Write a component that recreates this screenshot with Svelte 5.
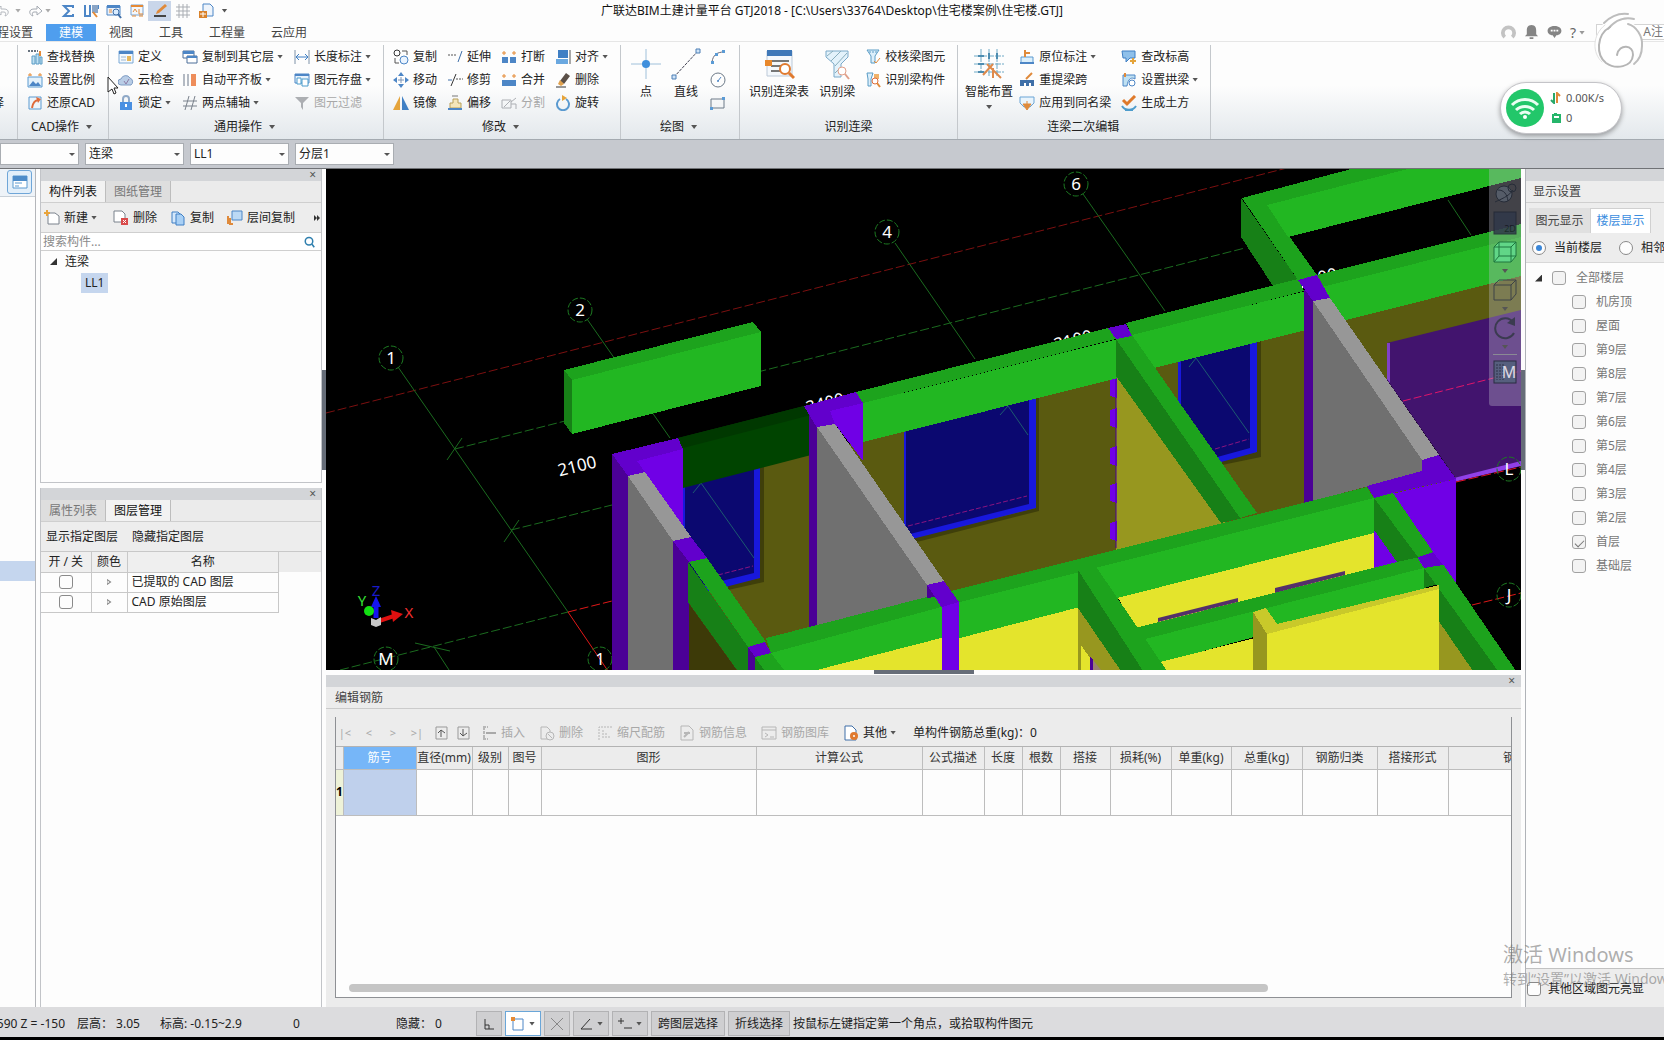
<script lang="ts">
  type Item = { icon: string; label: string; arrow?: boolean; disabled?: boolean }

  // 16x16 icon artwork, keyed by command
  const icons: Record<string, string> = {
    undo: '<path d="M9 13c4-1 5-7-1-7H5V3L0 8l5 4V9h3c2 0 2 2 1 4z" fill="none" stroke="#b5b9bf"/>',
    redo: '<path d="M7 13c-4-1-5-7 1-7h3V3l5 5-5 4V9H8c-2 0-2 2-1 4z" fill="none" stroke="#a5aab2"/>',
    sum: '<path d="M13 5V3H4l5 5-5 5h9v-2" fill="none" stroke="#4d86c6" stroke-width="2"/>',
    calc: '<path d="M2 2v11h5V9M7 2v7M10 2v4M13 2v4M16 2v4" fill="none" stroke="#4d86c6" stroke-width="2"/><path d="M9 2h6v8H9z" fill="#8aa5c6"/><path d="M10 9l4 5" stroke="#e58a35" stroke-width="2"/>',
    lookup: '<path d="M1 3h13v9H1z" fill="#e9f1fb" stroke="#4d86c6"/><path d="M1 2h13v3H1z" fill="#4d86c6"/><path d="M3 7h3M3 9h3" stroke="#e58a35"/><circle cx="10" cy="9" r="3" fill="#d9ecff" stroke="#3f6fa8"/><path d="M12 11l3 4" stroke="#3f6fa8" stroke-width="2"/>',
    review: '<path d="M2 2h12v10H2z" fill="#f3f7fc" stroke="#7ba3cf"/><path d="M2 3h12" stroke="#e58a35" stroke-width="2"/><path d="M4 9l2-3 2 3M10 6v5h4M3 13h4M10 13h4" fill="none" stroke="#e58a35"/>',
    edit: '<path d="M2 13h12" stroke="#444" stroke-width="2"/><path d="M4 11l1-3 8-7 2 2-8 7z" fill="#e08a3a"/>',
    gridlines: '<path d="M1 4h14M1 8h14M1 12h14M4 1v14M8 1v14M12 1v14" stroke="#a9adb3" fill="none"/>',
    export: '<path d="M5 1h7l3 3v9H5z" fill="#eef4fb" stroke="#4d86c6"/><path d="M1 8h8v7H1z" fill="#d9822b"/><path d="M5 9v5M2 11h6" stroke="#fff"/>',
    find: '<path d="M1 2h10" stroke="#68737f" stroke-width="2" stroke-dasharray="2 1"/><path d="M5 7h3v8H5zM9 5h3v10H9zM13 8h2v7h-2z" fill="#bfe0f2" stroke="#5a9cc5"/><path d="M13 2v5" stroke="#e58a35" stroke-width="2"/>',
    scale: '<path d="M1 5h14v10H1z" fill="#e4f1fb" stroke="#5a9ad0"/><path d="M2 14l4-5 3 3 2-2 3 4z" fill="#4d86c6"/><path d="M3 1v3M13 1v3M1 3h4M11 3h4" stroke="#e58a35"/>',
    restore: '<path d="M2 2h12v12H2z" fill="#eef5fb" stroke="#5a9ad0"/><path d="M5 13c1-6 3-7 6-8" fill="none" stroke="#df6b3b" stroke-width="2"/><path d="M9 2l5 2-3 4z" fill="#df6b3b"/>',
    define: '<path d="M1 2h14v12H1z" fill="#f5f9fd" stroke="#7ba9d6"/><path d="M1 2h14v3H1z" fill="#4d86c6"/><path d="M3 8h5M3 11h5" stroke="#9bb7d3"/><path d="M9 7h4v5H9z" fill="#e6b85c"/>',
    cloud: '<path d="M3 13a3 3 0 0 1 0-6 5 5 0 0 1 9-1 4 4 0 0 1 1 7z" fill="#b9cde6" stroke="#7e9cc4"/><path d="M6 9l2 3 3-5" fill="none" stroke="#8d7ba5"/>',
    lock: '<path d="M5 7V4a3 3 0 0 1 6 0v3" fill="none" stroke="#8fa9c7" stroke-width="2"/><path d="M2 7h12v8H2z" fill="#4a90e2"/><path d="M8 9v3" stroke="#fff" stroke-width="2"/>',
    copyfloor: '<path d="M1 2h11v7H1z" fill="#fff" stroke="#4d6f99"/><path d="M1 2h11v3H1z" fill="#4d86c6"/><path d="M5 7h10v7H5z" fill="#fff" stroke="#4d6f99"/><path d="M5 7h10v2H5z" fill="#4d86c6"/>',
    slab: '<path d="M2 2v12M6 2v12" stroke="#b4bac3" stroke-width="2"/><path d="M9 2h5v12H9z" fill="#ee8d5b"/>',
    axis: '<path d="M3 15L7 1M9 15l4-14M1 6h14M1 11h14" stroke="#7a828c" fill="none"/>',
    dim: '<path d="M1 1v14M15 1v14" stroke="#7e92a8"/><path d="M2 8h12M5 5L2 8l3 3M11 5l3 3-3 3" fill="none" stroke="#3f7fc4"/>',
    store: '<path d="M1 2h14v9H1z" fill="#e9f3fc" stroke="#4d86c6"/><path d="M1 2h14v2H1z" fill="#4d86c6"/><path d="M3 6h4v6H3zM8 7h6v7H8z" fill="#fff" stroke="#4d9ccc"/>',
    filter: '<path d="M1 2h14L9 8v7l-2-3V8z" fill="#9a9da1"/>',
    copy: '<circle cx="4" cy="4" r="3" fill="none" stroke="#333"/><circle cx="11" cy="11" r="4" fill="#eaf4ff" stroke="#4d86c6"/><path d="M9 2h5v4M2 9v5h4" fill="none" stroke="#555"/>',
    move: '<path d="M8 0l3 4H5zM8 16l3-4H5zM0 8l4-3v6zM16 8l-4-3v6z" fill="#4d86c6"/><path d="M8 5v6M5 8h6" stroke="#7a93b5"/>',
    mirror: '<path d="M7 1v14H0z" fill="#e5a43b"/><path d="M9 1v14h7z" fill="#3f7fc4"/>',
    extend: '<path d="M1 6h8" stroke="#555" stroke-dasharray="2 1"/><path d="M15 2l-4 11" stroke="#3f6fa8"/>',
    trim: '<path d="M1 8h4" stroke="#3f6fa8"/><path d="M9 7h7" stroke="#555" stroke-dasharray="2 1"/><path d="M9 2L4 14" stroke="#333"/>',
    offset: '<path d="M3 13V8h3V4h5v4h3v5z" fill="#f4e6ba" stroke="#b8a05a"/><path d="M1 14h14" stroke="#4d86c6" stroke-width="2"/><path d="M5 1h6" stroke="#777"/>',
    cut: '<path d="M1 8h6v6H1zM9 8h6v6H9z" fill="#4d86c6"/><path d="M1 4h4M11 4h4M3 2v4M13 2v4" stroke="#e58a35"/>',
    join: '<path d="M1 8h14v6H1z" fill="#4d86c6"/><path d="M1 4h4M11 4h4M3 2v4M13 2v4" stroke="#e58a35"/>',
    split: '<path d="M1 5h9v8H1zM10 7l5-4M10 9h5v5M3 12l6-6" fill="none" stroke="#9b9ea3"/>',
    align: '<path d="M3 1h10v8H3z" fill="#3f7fc4"/><path d="M1 10h12v5H1z" fill="#6aa8e0"/><path d="M15 1v14" stroke="#555"/>',
    erase: '<path d="M5 9l6-8 4 3-6 8z" fill="#5b5048"/><path d="M5 8l4 4-3 2-3-2z" fill="#e0a04b"/><path d="M1 15h10" stroke="#333"/>',
    rotate: '<path d="M5 4a6 6 0 1 0 6 0" fill="none" stroke="#5a9ad0" stroke-width="2"/><path d="M7 0v6l5-3z" fill="#e5a43b"/>',
    arc: '<path d="M2 13C3 6 7 3 14 3" fill="none" stroke="#667"/><path d="M1 12h3v3H1zM12 1h3v3h-3zM5 4h3v3H5z" fill="#5b9bd5"/>',
    circle: '<circle cx="8" cy="8" r="7" fill="none" stroke="#6d7a88"/><path d="M8 9l3-4" stroke="#4d86c6"/><circle cx="8" cy="9" r="1" fill="#4d86c6"/>',
    rect: '<path d="M1 4h13v9H1z" fill="none" stroke="#6d7a88"/><path d="M12 2h3v3h-3zM0 12h3v3H0z" fill="#5b9bd5"/>',
    checkbeam: '<path d="M2 1h12l-4 6v7H6V7z" fill="#dceffb" stroke="#5a9cc5"/><path d="M4 3h8" stroke="#5a9cc5" stroke-dasharray="2 1"/><path d="M9 12l2 2 4-5" fill="none" stroke="#df8a3b"/>',
    beampart: '<path d="M2 1h6l-2 6v7H3V7z" fill="#dceffb" stroke="#5a9cc5"/><path d="M9 2h5v5H9z" fill="#f0b26a"/><circle cx="10" cy="9" r="3" fill="#fff" stroke="#df6b3b"/><path d="M12 11l3 4" stroke="#df8a3b" stroke-width="2"/>',
    origin: '<path d="M2 8h12v6H2z" fill="#dceffb" stroke="#5a9ad0"/><path d="M1 14h14" stroke="#4d86c6" stroke-width="2"/><path d="M6 1v7M6 4h5" stroke="#df8a3b" stroke-width="2"/>',
    span: '<path d="M1 8h14v6h-3v-3h-2v3H7v-3H5v3H1z" fill="#3f6fa8"/><path d="M7 7l6-6" stroke="#df8a3b" stroke-width="2"/>',
    apply: '<path d="M1 2h14v6l-4 4H5L1 8z" fill="#e9f4fc" stroke="#6aa5d6"/><path d="M8 6v5M4 9l4 6 4-6z" fill="#df8a3b" stroke="#df8a3b"/>',
    level: '<path d="M1 2h13v7H9l-4 4V9H2z" fill="#8fc0ea" stroke="#3f7fc4"/><path d="M12 9v6M9 12h6" stroke="#e5a43b" stroke-width="2"/>',
    arch: '<path d="M2 3h12v4c-3-2-7-1-8 7H2z" fill="#bfe0f2" stroke="#4d86c6"/><circle cx="11" cy="11" r="3" fill="#fff" stroke="#4d86c6"/><path d="M4 1v4" stroke="#df8a3b" stroke-width="2"/>',
    earth: '<path d="M2 5l4 4 8-8" fill="none" stroke="#df7a2b" stroke-width="3"/><path d="M1 11c3 5 11 5 14 0M4 15h8" fill="none" stroke="#4d9ccc" stroke-width="2"/>',
    new: '<path d="M4 3h7l4 3v8H4z" fill="#fff" stroke="#7a828c"/><path d="M3 0v6M0 3h6" stroke="#e8a33a" stroke-width="2"/>',
    remove: '<path d="M1 1h8l3 3v8H1z" fill="#fff" stroke="#7a828c"/><path d="M8 8h7v7H8z" fill="#d94b4b"/><path d="M10 10l3 3M13 10l-3 3" stroke="#fff"/>',
    duplicate: '<path d="M2 2h6l2 2v9H2z" fill="#d5e8fb" stroke="#3f7fc4"/><path d="M6 4h5l3 3v8H6z" fill="#a9d0f5" stroke="#3f7fc4"/>',
    layercopy: '<path d="M5 1h10v9H5z" fill="#bcd9f5" stroke="#4d86c6"/><path d="M1 6v8M3 8v6h3" fill="none" stroke="#df8a3b" stroke-width="2"/>',
    up: '<path d="M2 2h11v12H2z" fill="none" stroke="#999"/><path d="M7 12V5M4 8l3-3 4 3" fill="none" stroke="#555"/>',
    down: '<path d="M2 2h11v12H2z" fill="none" stroke="#999"/><path d="M7 4v7M4 8l3 3 4-3" fill="none" stroke="#555"/>',
    insert: '<path d="M2 2h5M2 14h5M3 2v12" fill="none" stroke="#aaa" stroke-width="2" stroke-dasharray="3 1"/><path d="M5 8h10" stroke="#999" stroke-width="2"/>',
    delrow: '<path d="M2 2h6l3 3v9H2z" fill="none" stroke="#aaa"/><circle cx="11" cy="11" r="4" fill="#ececec" stroke="#aaa"/><path d="M9 9l4 4" stroke="#aaa"/>',
    ruler: '<path d="M2 15V2h13M5 6h2M5 9h5M5 12h9" fill="none" stroke="#aaa" stroke-dasharray="2 1"/>',
    info: '<path d="M2 1h8l4 4v10H2z" fill="none" stroke="#aaa"/><path d="M5 8h6M5 12l5-5" stroke="#aaa" stroke-width="2"/>',
    library: '<path d="M1 2h14v12H1zM1 5h14M4 8l3 2-3 2M9 12h4" fill="none" stroke="#aaa"/>',
    other: '<path d="M2 1h7l4 4v10H2z" fill="#fff" stroke="#3f6fa8"/><circle cx="11" cy="11" r="4" fill="#e07a2f"/><circle cx="11" cy="11" r="1" fill="#fff"/>',
    ortho: '<path d="M4 3v10h9M4 9h4v4" fill="none" stroke="#333"/>',
    snap: '<path d="M3 3h10v11H3z" fill="#fff" stroke="#4d86c6"/><path d="M1 1h4v4H1z" fill="#e58a35"/>',
    cross: '<path d="M2 2l12 12M14 2L2 14" stroke="#888"/>',
    angle: '<path d="M12 3L3 13h11" fill="none" stroke="#333"/>',
    plus: '<path d="M1 5h6M4 2v6M7 12h8" stroke="#333"/>'
  }

  const quickIcons = ['sum', 'calc', 'lookup', 'review', 'edit', 'gridlines', 'export']
  const menuTabs = ['工程设置', '建模', '视图', '工具', '工程量', '云应用']

  const cadColumns: Item[][] = [
    [
      { icon: 'find', label: '查找替换' },
      { icon: 'scale', label: '设置比例' },
      { icon: 'restore', label: '还原CAD' }
    ]
  ]
  const commonColumns: Item[][] = [
    [
      { icon: 'define', label: '定义' },
      { icon: 'cloud', label: '云检查' },
      { icon: 'lock', label: '锁定', arrow: true }
    ],
    [
      { icon: 'copyfloor', label: '复制到其它层', arrow: true },
      { icon: 'slab', label: '自动平齐板', arrow: true },
      { icon: 'axis', label: '两点辅轴', arrow: true }
    ],
    [
      { icon: 'dim', label: '长度标注', arrow: true },
      { icon: 'store', label: '图元存盘', arrow: true },
      { icon: 'filter', label: '图元过滤', disabled: true }
    ]
  ]
  const modifyColumns: Item[][] = [
    [
      { icon: 'copy', label: '复制' },
      { icon: 'move', label: '移动' },
      { icon: 'mirror', label: '镜像' }
    ],
    [
      { icon: 'extend', label: '延伸' },
      { icon: 'trim', label: '修剪' },
      { icon: 'offset', label: '偏移' }
    ],
    [
      { icon: 'cut', label: '打断' },
      { icon: 'join', label: '合并' },
      { icon: 'split', label: '分割', disabled: true }
    ],
    [
      { icon: 'align', label: '对齐', arrow: true },
      { icon: 'erase', label: '删除' },
      { icon: 'rotate', label: '旋转' }
    ]
  ]
  const recognizeColumns: Item[][] = [
    [
      { icon: 'checkbeam', label: '校核梁图元' },
      { icon: 'beampart', label: '识别梁构件' }
    ]
  ]
  const beamColumns: Item[][] = [
    [
      { icon: 'origin', label: '原位标注', arrow: true },
      { icon: 'span', label: '重提梁跨' },
      { icon: 'apply', label: '应用到同名梁' }
    ],
    [
      { icon: 'level', label: '查改标高' },
      { icon: 'arch', label: '设置拱梁', arrow: true },
      { icon: 'earth', label: '生成土方' }
    ]
  ]

  const selectors = [
    { name: '构件类型', value: '连梁' },
    { name: '构件', value: 'LL1' },
    { name: '分层', value: '分层1' }
  ]

  const componentTools: Item[] = [
    { icon: 'new', label: '新建', arrow: true },
    { icon: 'remove', label: '删除' },
    { icon: 'duplicate', label: '复制' },
    { icon: 'layercopy', label: '层间复制' }
  ]
  const layers = ['已提取的 CAD 图层', 'CAD 原始图层']

  const rebarTools: Item[] = [
    { icon: 'insert', label: '插入', disabled: true },
    { icon: 'delrow', label: '删除', disabled: true },
    { icon: 'ruler', label: '缩尺配筋', disabled: true },
    { icon: 'info', label: '钢筋信息', disabled: true },
    { icon: 'library', label: '钢筋图库', disabled: true },
    { icon: 'other', label: '其他', arrow: true }
  ]
  const rebarColumns = [
    { title: '筋号', width: 73 },
    { title: '直径(mm)', width: 56 },
    { title: '级别', width: 36 },
    { title: '图号', width: 33 },
    { title: '图形', width: 215 },
    { title: '计算公式', width: 166 },
    { title: '公式描述', width: 62 },
    { title: '长度', width: 38 },
    { title: '根数', width: 38 },
    { title: '搭接', width: 50 },
    { title: '损耗(%)', width: 61 },
    { title: '单重(kg)', width: 60 },
    { title: '总重(kg)', width: 71 },
    { title: '钢筋归类', width: 75 },
    { title: '搭接形式', width: 71 },
    { title: '钢筋类型', width: 158 }
  ]

  const floors = ['机房顶', '屋面', '第9层', '第8层', '第7层', '第6层', '第5层', '第4层', '第3层', '第2层', '首层', '基础层']

  const axisLabels = [
    { text: '1', x: 391, y: 358 },
    { text: '2', x: 580, y: 310 },
    { text: '4', x: 887, y: 232 },
    { text: '6', x: 1076, y: 184 },
    { text: 'M', x: 386, y: 659 },
    { text: '1', x: 600, y: 659 },
    { text: 'J', x: 1509, y: 595 }
  ]
  const dimensions = [
    { text: '2100', x: 577, y: 466 },
    { text: '2400', x: 825, y: 403 },
    { text: '2100', x: 1073, y: 340 },
    { text: '2400', x: 1318, y: 278 }
  ]
  const braces = [378, 408, 446, 483, 521]
</script>

{#snippet icon(name: string)}
  <svg class="icon" viewBox="0 0 16 16" aria-hidden="true">{@html icons[name]}</svg>
{/snippet}

{#snippet command(item: Item)}
  <button class="command" disabled={item.disabled}>
    {@render icon(item.icon)}
    <span>{item.label}</span>
    {#if item.arrow}<i class="caret"></i>{/if}
  </button>
{/snippet}

{#snippet commandColumns(columns: Item[][])}
  {#each columns as column}
    <div class="column">
      {#each column as item (item.label)}
        {@render command(item)}
      {/each}
    </div>
  {/each}
{/snippet}

<div class="app">
  <header>
    <div class="title-bar">
      <div class="quick">
        <button class="history" aria-label="撤销">{@render icon('undo')}<i class="caret"></i></button>
        <button class="history" aria-label="恢复">{@render icon('redo')}<i class="caret"></i></button>
        {#each quickIcons as name (name)}
          <button class="quick-button" class:on={name === 'edit'} aria-label={name}>{@render icon(name)}</button>
        {/each}
        <button class="quick-more" aria-label="更多"><i class="caret"></i></button>
      </div>
      <h1>广联达BIM土建计量平台 GTJ2018 - [C:\Users\33764\Desktop\住宅楼案例\住宅楼.GTJ]</h1>
    </div>

    <div class="menu-row">
      <nav>
        {#each menuTabs as tab (tab)}
          <button class="menu-tab" class:active={tab === '建模'}>{tab}</button>
        {/each}
      </nav>
      <div class="account">
        <svg viewBox="0 0 16 16" aria-hidden="true"><path d="M4 14a6 6 0 1 1 8 0" fill="none" stroke="#c3c3c3" stroke-width="4" /></svg>
        <svg viewBox="0 0 16 16" aria-hidden="true"><path d="M8 1c4 0 5 3 5 6v4l2 2H1l2-2V7c0-3 1-6 5-6zM6 14h4v2H6z" fill="#858585" /></svg>
        <svg viewBox="0 0 16 16" aria-hidden="true"><path d="M8 2c10 0 9 10 2 10l-2 3-2-3C-1 12-2 2 8 2z" fill="#858585" /><path d="M4 7h2M7 7h2M10 7h2" stroke="#fff" stroke-width="2" /></svg>
        <span class="help">?<i class="caret"></i></span>
        <input class="help-search" type="text" value="A注" aria-label="搜索帮助" />
      </div>
    </div>

    <div class="ribbon">
      <section class="group cut-off"><div class="group-body"><div class="column"><span></span><span></span><button class="command">选择</button></div></div></section>
      <section class="group cad">
        <div class="group-body">{@render commandColumns(cadColumns)}</div>
        <footer>CAD操作<i class="caret"></i></footer>
      </section>
      <section class="group common">
        <div class="group-body">{@render commandColumns(commonColumns)}</div>
        <footer>通用操作<i class="caret"></i></footer>
      </section>
      <section class="group">
        <div class="group-body">{@render commandColumns(modifyColumns)}</div>
        <footer>修改<i class="caret"></i></footer>
      </section>
      <section class="group draw">
        <div class="group-body">
          <button class="large">
            <svg viewBox="0 0 32 32" aria-hidden="true"><path d="M16 1v30M1 16h30" stroke="#9fc0da" /><circle cx="16" cy="16" r="4" fill="#3f8fdc" /></svg>
            <span>点</span>
          </button>
          <button class="large">
            <svg viewBox="0 0 32 32" aria-hidden="true"><path d="M4 29L28 3" stroke="#445" stroke-dasharray="3 1" /><path d="M2 27h4v4H2zM26 1h4v4h-4z" fill="#cfe3f7" stroke="#4d7fb5" /></svg>
            <span>直线</span>
          </button>
          <div class="column">
            {#each ['arc', 'circle', 'rect'] as name (name)}
              <button class="command" aria-label={name}>{@render icon(name)}</button>
            {/each}
          </div>
        </div>
        <footer>绘图<i class="caret"></i></footer>
      </section>
      <section class="group recognize">
        <div class="group-body">
          <button class="large">
            <svg viewBox="0 0 32 32" aria-hidden="true">
              <path d="M4 3h25v25H4z" fill="#f4f8fc" stroke="#bcc9d8" /><path d="M4 2h25v6H4z" fill="#3f78b8" />
              <path d="M8 13h18M8 18h10M8 23h9" stroke="#777" stroke-width="2" /><path d="M2 12h7v6H2z" fill="#e8882c" />
              <circle cx="22" cy="21" r="5" fill="#fff" stroke="#e07a2f" stroke-width="2" /><path d="M26 25l5 5" stroke="#e07a2f" stroke-width="3" />
            </svg>
            <span>识别连梁表</span>
          </button>
          <button class="large">
            <svg viewBox="0 0 32 32" aria-hidden="true">
              <path d="M5 3h22v6l-7 7v13h-7V16L5 9z" fill="#e3f2fb" stroke="#7aa9c9" /><path d="M6 8l6-5M10 13L20 3M14 18L26 5M14 25l6-6" stroke="#89aebd" />
              <circle cx="21" cy="23" r="4" fill="#fff" stroke="#e0a08a" /><path d="M24 26l4 5" stroke="#e0a08a" stroke-width="2" />
            </svg>
            <span>识别梁</span>
          </button>
          {@render commandColumns(recognizeColumns)}
        </div>
        <footer>识别连梁</footer>
      </section>
      <section class="group beam">
        <div class="group-body">
          <button class="large">
            <svg viewBox="0 0 32 32" aria-hidden="true">
              <path d="M8 1v24M16 1v28M24 1v28M1 8h30M1 16h30M1 24h30" stroke="#6fa9c6" stroke-dasharray="6 1" />
              <path d="M5 8h6M5 16h6M5 24h6M16 5v6M24 5v6" stroke="#4d8cb0" stroke-width="2" />
              <path d="M10 27L20 16M14 16l14 14M20 20v10" stroke="#df8a4b" stroke-width="2" />
            </svg>
            <span>智能布置</span>
            <i class="caret"></i>
          </button>
          {@render commandColumns(beamColumns)}
        </div>
        <footer>连梁二次编辑</footer>
      </section>
    </div>

    <div class="selectors">
      <div class="select-box first"><select aria-label="楼层"><option></option></select></div>
      {#each selectors as selector (selector.name)}
        <div class="select-box">
          <select aria-label={selector.name}><option>{selector.value}</option></select>
        </div>
      {/each}
    </div>
  </header>

  <main>
    <aside class="module-strip">
      <div class="strip-head">
        <button aria-label="视图切换"><svg viewBox="0 0 16 16" aria-hidden="true"><path d="M1 2h14v12H1z" fill="#fff" stroke="#5a9ad0" /><path d="M1 2h14v5H1z" fill="#4d8cc9" /><path d="M3 9h7M3 12h4" stroke="#5a9ad0" /></svg></button>
      </div>
      <div class="strip-selected"></div>
    </aside>

    <div class="left-panels">
      <section class="panel components">
        <div class="panel-strip"><button aria-label="关闭">×</button></div>
        <div class="tabs"><button class="active">构件列表</button><button>图纸管理</button></div>
        <div class="tools">
          {#each componentTools as item (item.label)}
            {@render command(item)}
          {/each}
          <button class="overflow" aria-label="更多"><i></i><i></i></button>
        </div>
        <div class="search">
          <input type="text" placeholder="搜索构件..." aria-label="搜索构件" />
          <svg viewBox="0 0 16 16" aria-hidden="true"><circle cx="8" cy="7" r="5" fill="none" stroke="#2f7fae" stroke-width="2" /><path d="M12 11l3 4" stroke="#2f7fae" stroke-width="2" /></svg>
        </div>
        <ul class="tree">
          <li><i class="expander"></i>连梁</li>
          <li><span class="selected">LL1</span></li>
        </ul>
      </section>

      <section class="panel layers">
        <div class="panel-strip"><button aria-label="关闭">×</button></div>
        <div class="tabs"><button>属性列表</button><button class="active">图层管理</button></div>
        <div class="tools links"><button>显示指定图层</button><button>隐藏指定图层</button></div>
        <div class="layer-table">
          <table>
            <thead>
              <tr><th>开 / 关</th><th>颜色</th><th>名称</th></tr>
            </thead>
            <tbody>
              {#each layers as layer (layer)}
                <tr>
                  <td><input type="checkbox" aria-label={layer} /></td>
                  <td><i class="branch"></i></td>
                  <td>{layer}</td>
                </tr>
              {/each}
            </tbody>
          </table>
        </div>
      </section>
    </div>

    <div class="divider"><i class="grip"></i></div>

    <div class="center">
      <div class="viewport">
        <svg class="scene" viewBox="326 169 1195 501" preserveAspectRatio="xMidYMid slice" role="img" aria-label="三维模型">
          <rect x="326" y="169" width="1195" height="501" fill="#000" />

          <!-- axis grid -->
          <g class="grid">
            <path class="red dashed" d="M326 413L1287 168" />
            <path class="dashed" d="M455 449L1245 248M511 530L612 505M340 670L568 612" />
            <path class="bright dashed" d="M568 612L612 601M1472 605L1521 593" />
            <path class="bright" d="M568 612L608 671" />
            <path d="M398 367L568 612M462 438L447 460M519 520L504 542M415 643L450 651M434 647L449 670" />
            <path d="M587 319L670 438M895 243L975 359M1083 194L1165 311M1448 200L1471 235" />
          </g>
          <g class="dims">
            {#each dimensions as dim}
              <text transform="translate({dim.x} {dim.y}) rotate(-14)" y="6">{dim.text}</text>
            {/each}
          </g>
          <g class="marks">
            {#each axisLabels as mark}
              <circle cx={mark.x} cy={mark.y} r="12" />
              <text x={mark.x} y={mark.y + 6}>{mark.text}</text>
            {/each}
          </g>

          <!-- back walls -->
          <path class="wall" d="M683 487L863 440L1116 376L1305 329L1347 318L1521 274V314L1387 346V400L1456 479L1374 500L760 670H688V560z" />
          <path d="M688 602L737 670H688z" fill="#3d3a08" />
          <path d="M1387 343L1521 310V462L1456 479L1387 380z" fill="#42146e" />
          <path d="M1387 343h3v40l-3-4z" fill="#8040c8" />
          <path d="M1403 401L1521 371" stroke="#e0146a" stroke-dasharray="8 3" />
          <path d="M1454 478L1521 461V466L1454 482z" fill="#9040e8" />
          <path d="M1456 482L1521 467" stroke="#e0102a" stroke-dasharray="10 3" />

          <!-- windows -->
          <path class="shade" d="M760 467L764 466V582L728 590V585L760 578z" />
          <path class="frame" d="M683 487L760 467V578L683 598z" />
          <path class="glass" d="M685 487L754 469V573L685 590z" />
          <path class="shade" d="M1036 398L1039 397V511L913 543V538L1036 508z" />
          <path class="frame" d="M904 432L1036 398V508L904 541z" />
          <path class="glass" d="M906 431L1029 400V504L906 535z" />
          <path class="shade" d="M1257 341L1261 340V457L1222 465V460L1257 452z" />
          <path class="frame" d="M1178 362L1257 341V452L1178 474z" />
          <path class="glass" d="M1181 361L1250 343V448L1181 467z" />
          <path d="M701 483L754 558M701 483L693 493M1008 406L1028 435M1008 406L1000 415M1196 358L1249 433M1196 358L1189 367" stroke="#1d5a70" fill="none" />
          <path d="M718 575L753 566M908 526L1027 496M1215 449L1249 439" stroke="#8a1480" stroke-dasharray="5 2" />

          <!-- olive room wall and purple braces -->
          <path class="olive" d="M1116 372L1117 374L1226 524L1160 542L1116 554z" />
          {#each braces as y}
            <path class="violet" d="M1110 {y + 2}L1117 {y}V{y + 20}L1110 {y + 18}z" />
          {/each}
          <path d="M1116 375V548" stroke="#4b0096" />

          <!-- upper right beam -->
          <path class="top" d="M1242 198L1355 168H1412L1267 205L1317 275L1298 280z" />
          <path class="face" d="M1267 205L1412 168H1521V178L1288 237z" />
          <path class="side" d="M1241 198L1298 280L1273 286L1241 237z" />

          <!-- rear beam -->
          <path d="M678 438L812 404L815 454L683 488z" fill="#004400" />
          <path d="M678 438L812 404L815 414L683 448z" fill="#003800" />
          <path class="top" d="M856 392L1108 328L1116 339L863 403z" />
          <path class="face" d="M863 403L1118 339V378L863 442z" />
          <path class="top" d="M1126 323L1298 279L1304 291L1132 336z" />
          <path class="face" d="M1128 336L1306 291V330L1150 369z" />
          <path class="top" d="M1317 275L1521 224V237L1322 287z" />
          <path class="face" d="M1318 288L1521 237V276L1342 321z" />
          <path class="side" d="M1116 338L1242 518L1221 523L1116 376z" />
          <path class="top" d="M1116 339L1132 335L1257 513L1240 518z" />
          <path class="violet-top" d="M1108 328L1126 324L1132 336L1116 339z" />

          <!-- floating beam -->
          <path class="top" d="M564 370L753 322L761 332L572 380z" />
          <path class="face" d="M572 380L761 332V386L572 434z" />
          <path class="side" d="M564 370L572 380V434L564 423z" />

          <!-- left column and wall -->
          <path class="violet-top" d="M612 454L678 438L683 449L645 472L628 477z" />
          <path class="violet" d="M637 461L683 449V526L645 472z" />
          <path class="violet-side" d="M612 454L628 476V670H612z" />
          <path class="grey" d="M628 476L673 541V670H628z" />
          <path class="grey-top" d="M628 476L645 472L691 537L673 541z" />
          <path class="violet-side" d="M673 541L689 562V670H673z" />
          <path class="violet-top" d="M673 541L691 537L707 558L689 562z" />
          <path class="side" d="M688 562L748 647V670H737L688 602z" />
          <path class="top" d="M689 562L707 558L766 642L748 647z" />

          <!-- middle column and wall -->
          <path class="violet-side" d="M809 412L817 424V628H809z" />
          <path class="violet-top" d="M804 406L856 392L863 403L835 424L817 428z" />
          <path class="violet" d="M830 411L863 403V461L835 424z" />
          <path class="grey" d="M817 427L930 585V598L817 627z" />
          <path class="grey-top" d="M817 427L835 424L944 581L927 585z" />

          <!-- right column and wall -->
          <path class="violet-side" d="M1304 289L1314 300V502L1304 504z" />
          <path class="grey" d="M1313 301L1424 460V471L1313 501z" />
          <path class="grey-top" d="M1313 301L1330 298L1439 455L1422 460z" />
          <path class="violet-top" d="M1298 280L1317 275L1330 298L1313 301z" />
          <path class="violet" d="M1374 498L1456 479V583L1440 575L1374 568z" />
          <path class="violet-top" d="M1367 486L1422 471V460L1439 455L1456 479L1393 493L1374 498z" />

          <!-- front beams -->
          <path class="yellow" d="M813 671L941 636L1078 604V671zM1117 596L1374 530V570L1137 631z" />
          <path class="top" d="M766 638L927 597H937L943 608L771 653z" />
          <path class="face" d="M771 653L945 606V637L813 671H783z" />
          <path class="top" d="M951 591L1367 487L1374 498L1097 570L1078 574L957 604z" />
          <path class="face" d="M956 603L1080 572V607L956 639zM1095 568L1374 498V533L1117 598z" />
          <path class="violet-side" d="M927 585L935 597L927 598z" />
          <path class="violet-top" d="M927 585L944 581L959 602L942 608L935 597z" />
          <path class="violet" d="M942 607L959 602V671H942z" />
          <path class="violet-side" d="M748 647L755 657V670H748z" />
          <path class="violet-top" d="M748 647L765 642L771 653L755 657z" />
          <path class="side" d="M755 657L764 670H755z" />
          <path class="top" d="M755 657L771 653L784 670H764z" />
          <path class="olive" d="M1078 606L1124 671H1078z" />
          <path class="yellow" d="M1081 645L1090 658V670H1081z" />
          <path class="violet-side" d="M1090 656L1093 660V670H1090z" />
          <path d="M1093 660L1101 670H1093z" fill="#9a8070" />
          <path d="M1158 618L1238 598V602L1158 622zM1275 588L1345 571V575L1275 593z" fill="#54306a" />
          <path class="face" d="M1143 637L1424 567V590L1160 663z" />
          <path class="top" d="M1135 628L1417 557L1424 568L1145 639z" />
          <path class="yellow" d="M1160 662L1255 638V671H1165z" />
          <path class="side" d="M1078 570L1145 671H1121L1078 608z" />
          <path class="top" d="M1078 570L1097 568L1167 671H1143z" />
          <path class="side" d="M1374 498L1420 557L1397 562L1374 530z" />
          <path class="top" d="M1374 498L1393 493L1433 552L1418 557z" />
          <path class="olive" d="M1438 618L1475 671H1438z" />
          <path class="side" d="M1424 566L1500 671H1473L1438 620V584L1424 588z" />
          <path class="top" d="M1424 568L1443 564L1516 671H1498z" />
          <path class="violet-top" d="M1418 557L1433 552L1443 565L1424 568z" />
          <path class="olive" d="M1253 612L1267 634V670H1253z" />
          <path class="yellow" d="M1267 634L1439 588V671H1267z" />
          <path class="ledge" d="M1253 612L1266 608L1277 624L1439 585V589L1267 634z" />

          <g class="marks"><circle cx="1509" cy="469" r="12" /><text x="1509" y="475">L</text></g>

          <!-- orientation gizmo -->
          <path d="M376 618V602" stroke="#1515f0" stroke-width="5" />
          <path d="M371 607L376 596L381 607z" fill="#1515f0" />
          <path d="M379 621L394 616" stroke="#e01010" stroke-width="4" />
          <path d="M391 610L403 614L393 622z" fill="#e01010" />
          <circle cx="369" cy="611" r="5" fill="#12e012" />
          <path d="M371 618L376 620L381 617V625L376 627L371 625z" fill="#c8c8c8" />
          <g class="gizmo-text">
            <text x="362" y="606" fill="#35e035">Y</text>
            <text x="376" y="596" fill="#1a1ac8">Z</text>
            <text x="409" y="618" fill="#f03030">X</text>
          </g>
        </svg>

        <div class="view-tools">
          <button aria-label="动态观察"><svg viewBox="0 0 24 24" aria-hidden="true"><circle cx="11" cy="12" r="8" fill="#59616e" stroke="#222936" /><circle cx="19" cy="6" r="4" fill="none" stroke="#222936" /><path d="M2 20C8 17 15 15 20 8M5 8c6 0 9 4 10 11" fill="none" stroke="#222936" /></svg></button>
          <button aria-label="二维"><svg viewBox="0 0 24 24" aria-hidden="true"><rect x="1" y="1" width="22" height="22" fill="#30384a" stroke="#202634" /><text x="17" y="21" font-size="9" fill="#10151f">2D</text></svg></button>
          <button aria-label="三维"><svg viewBox="0 0 24 24" aria-hidden="true"><path d="M1 7l5-5h17v14l-5 6H1z" fill="#63dc8f" stroke="#156b38" /><path d="M1 7h17v15M18 7l5-5M6 2v14h17M6 16l-5 6" fill="none" stroke="#156b38" /></svg></button>
          <i class="caret"></i>
          <button aria-label="线框"><svg viewBox="0 0 24 24" aria-hidden="true"><path d="M1 7l5-5h17v14l-5 6H1zM1 7h17v15M18 7l5-5" fill="none" stroke="#333846" /></svg></button>
          <i class="caret"></i>
          <button aria-label="旋转视图"><svg viewBox="0 0 24 24" aria-hidden="true"><path d="M20 6a10 10 0 1 0 1 11" fill="none" stroke="#333846" stroke-width="2" /><path d="M22 1v9l-8-3z" fill="#333846" /></svg></button>
          <i class="caret"></i>
          <hr />
          <button aria-label="显示设置"><svg viewBox="0 0 24 24" aria-hidden="true"><rect x="1" y="1" width="22" height="22" fill="#53627c" stroke="#202634" /><path d="M4 4v16M7 4v16M10 4v16" stroke="#252c3c" stroke-dasharray="2 1" /><text x="16" y="18" font-size="16" fill="#f0f0f4">M</text></svg></button>
        </div>
      </div>

      <div class="bottom-divider"><i class="grip"></i></div>

      <section class="rebar">
        <div class="panel-strip"><button aria-label="关闭">×</button></div>
        <h2>编辑钢筋</h2>
        <div class="rebar-frame">
          <div class="rebar-tools">
            <button class="nav" disabled>|&lt;</button>
            <button class="nav" disabled>&lt;</button>
            <button class="nav" disabled>&gt;</button>
            <button class="nav" disabled>&gt;|</button>
            <button class="step" aria-label="上移">{@render icon('up')}</button>
            <button class="step" aria-label="下移">{@render icon('down')}</button>
            <div class="rebar-commands">
              {#each rebarTools as item (item.label)}
                {@render command(item)}
              {/each}
              <span>单构件钢筋总重(kg)：0</span>
            </div>
          </div>
          <div class="rebar-scroll">
            <table>
              <colgroup>
                <col class="row-number" />
                {#each rebarColumns as column (column.title)}
                  <col style="width: {column.width}px" />
                {/each}
              </colgroup>
              <thead>
                <tr>
                  <th></th>
                  {#each rebarColumns as column, i (column.title)}
                    <th class:current={i === 0}>{column.title}</th>
                  {/each}
                </tr>
              </thead>
              <tbody>
                <tr>
                  <th>1</th>
                  {#each rebarColumns as column, i (column.title)}
                    <td class:current={i === 0}></td>
                  {/each}
                </tr>
              </tbody>
            </table>
          </div>
          <div class="scrollbar"><i></i></div>
        </div>
      </section>
    </div>

    <div class="divider"><i class="grip"></i></div>

    <aside class="display">
      <div class="panel-strip"></div>
      <h2>显示设置</h2>
      <div class="display-tabs"><button>图元显示</button><button class="active">楼层显示</button></div>
      <div class="scope">
        <label><input type="radio" name="scope" checked />当前楼层</label>
        <label><input type="radio" name="scope" />相邻楼层</label>
      </div>
      <div class="floors">
        <label class="all"><i class="expander"></i><input type="checkbox" />全部楼层</label>
        {#each floors as floor (floor)}
          <label><input type="checkbox" checked={floor === '首层'} />{floor}</label>
        {/each}
      </div>
      <div class="highlight"><label><input type="checkbox" />其他区域图元亮显</label></div>
    </aside>
  </main>

  <footer class="status">
    <div class="readout coords">X = 5590 Z = -150</div>
    <div class="readout height">层高：&nbsp;3.05</div>
    <div class="readout elevation">标高: -0.15~2.9</div>
    <div class="readout count">0</div>
    <div class="readout hidden-count">隐藏：&nbsp;0</div>
    <div class="status-tools">
      <button aria-label="正交">{@render icon('ortho')}</button>
      <button class="on" aria-label="捕捉">{@render icon('snap')}<i class="caret"></i></button>
      <button aria-label="交点">{@render icon('cross')}</button>
      <button aria-label="角度">{@render icon('angle')}<i class="caret"></i></button>
      <button aria-label="偏移">{@render icon('plus')}<i class="caret"></i></button>
      <button class="wide">跨图层选择</button>
      <button class="wide">折线选择</button>
      <span>按鼠标左键指定第一个角点，或拾取构件图元</span>
    </div>
  </footer>

  <svg class="brand" viewBox="0 0 60 60" aria-hidden="true">
    <path d="M32 4C14 6 4 20 6 36c2 12 12 20 22 20 20 0 28-22 20-38-4-6-8-8-12-8" fill="#fff" />
    <g fill="none" stroke-linecap="round">
      <path d="M14 12C22 4 30 2 38 3M18 18C26 8 36 6 44 8M38 13c8 2 15 12 14 22 0 8-3 14-8 18" stroke="#bdbdbd" stroke-width="2" />
      <path d="M20 16C6 24 6 44 16 52c10 7 26 4 27-8 1-10-14-12-16 0" stroke="#b5b5b5" stroke-width="2" />
      <path d="M15 14C2 24 2 42 12 51" stroke="#e2e2e2" />
    </g>
  </svg>

  <div class="network">
    <svg class="wifi" viewBox="0 0 38 38" aria-hidden="true">
      <circle cx="19" cy="19" r="19" fill="#22c76a" />
      <path d="M6 16a18 18 0 0 1 26 0M10 21a13 13 0 0 1 18 0M14 25a7 7 0 0 1 10 0" fill="none" stroke="#e9fff2" stroke-width="3" />
      <circle cx="19" cy="28" r="2" fill="#fff" />
    </svg>
    <div>
      <p><svg viewBox="0 0 12 12" aria-hidden="true"><path d="M4 1v10L1 8" fill="none" stroke="#29a869" stroke-width="2" /><path d="M7 11V1l3 3" fill="none" stroke="#e08a3a" stroke-width="2" /></svg>0.00K/s</p>
      <p><svg viewBox="0 0 12 12" aria-hidden="true"><path d="M2 2h2V1h3v1h4v9H2z" fill="#25b56a" /><path d="M4 4h5v2H4z" fill="#fff" /></svg>0</p>
    </div>
  </div>

  <div class="watermark">
    <p>激活 Windows</p>
    <p>转到“设置”以激活 Windows。</p>
  </div>

  <svg class="cursor" viewBox="0 0 12 19" aria-hidden="true"><path d="M1 1v15l4-3 2 5 2-1-2-5h4z" fill="#fff" stroke="#222" /></svg>
</div>

<style>
  :global(body) {
    margin: 0;
  }

  .app {
    position: relative;
    display: flex;
    flex-direction: column;
    min-height: 100vh;
    overflow: hidden;
    background: #fdfdfd;
    color: #222;
    font-family: "Noto Sans", "Noto Sans CJK SC", sans-serif;
    font-size: 12px;
    line-height: 16px;
  }

  .app,
  .app * {
    box-sizing: border-box;
  }

  h1,
  h2,
  p,
  ul {
    margin: 0;
    padding: 0;
    font-size: 12px;
    font-weight: 400;
  }

  button {
    flex: none;
    margin: 0;
    padding: 0;
    border: 0;
    background: none;
    color: inherit;
    font: inherit;
    white-space: nowrap;
  }

  button:disabled {
    color: #a8a8a8;
  }

  .icon {
    display: block;
    flex: none;
    width: 16px;
    height: 16px;
  }

  .caret {
    flex: none;
    width: 12px;
    height: 4px;
    background: #555;
    clip-path: polygon(3px 0, 9px 0, 6px 4px);
  }

  /* title and menu */
  .title-bar {
    display: grid;
    grid-template-columns: 1fr auto 1fr;
    height: 24px;
    align-items: center;
    padding-bottom: 3px;
  }

  h1 {
    color: #111;
  }

  .quick {
    display: flex;
    align-items: center;
    margin-left: -4px;
  }

  .history {
    display: flex;
    align-items: center;
    width: 30px;
  }

  .history .caret {
    background: #aaa;
  }

  .quick-button {
    display: grid;
    place-items: center;
    width: 23px;
    height: 20px;
  }

  .quick-button.on {
    background: #c9d6ea;
  }

  .quick-more {
    width: 15px;
    display: grid;
    place-items: center;
    height: 20px;
  }

  .menu-row {
    display: flex;
    justify-content: space-between;
    height: 18px;
    border-bottom: 1px solid #e6e6e6;
  }

  nav {
    display: flex;
    margin-left: -28px;
  }

  .menu-tab {
    height: 17px;
    padding: 0 13px;
    color: #444;
  }

  .menu-tab.active {
    background: #4f9eee;
    color: #fff;
  }

  .account {
    display: flex;
    gap: 8px;
  }

  .account svg {
    width: 15px;
    height: 15px;
  }

  .help {
    display: flex;
    align-items: center;
    color: #666;
    font-size: 14px;
  }

  .help .caret {
    background: #999;
  }

  .help-search {
    width: 68px;
    height: 16px;
    padding: 0 1px;
    border: 1px solid #d4d4d4;
    border-width: 1px 0 1px 1px;
    color: #777;
    font: inherit;
    text-align: right;
  }

  /* ribbon */
  .ribbon {
    display: flex;
    height: 98px;
    padding-top: 3px;
    border-bottom: 1px solid #a4aab0;
    background: linear-gradient(#fdfdfd 45%, #e3e8ec);
  }

  .group {
    flex: none;
    display: flex;
    flex-direction: column;
    padding: 0 9px;
    border-right: 1px solid #c4c8cc;
  }

  .group-body {
    display: flex;
    gap: 10px;
    height: 69px;
  }

  .common .group-body {
    gap: 8px;
  }

  .group footer {
    display: flex;
    justify-content: center;
    align-items: center;
    gap: 4px;
    height: 25px;
    padding-top: 1px;
  }

  .cut-off {
    width: 18px;
    padding: 0 13px 0 0;
    align-items: flex-end;
  }

  .cad {
    width: 91px;
  }

  .draw {
    width: 119px;
  }

  .draw .group-body {
    gap: 8px;
  }

  .recognize {
    width: 218px;
  }

  .beam {
    padding-left: 7px;
  }

  .beam .large {
    margin-right: -4px;
  }

  .column {
    display: grid;
    grid-template-rows: repeat(3, 23px);
    align-content: start;
    justify-items: start;
  }

  .command {
    display: flex;
    align-items: center;
    gap: 4px;
  }

  .command .caret {
    margin-left: -4px;
  }

  .command:disabled .icon {
    opacity: 0.8;
  }

  .large {
    display: flex;
    flex-direction: column;
    align-items: center;
    min-width: 32px;
    padding-top: 3px;
  }

  .large svg {
    width: 32px;
    height: 32px;
    margin-bottom: 4px;
  }

  .large .caret {
    margin-top: 5px;
  }

  .selectors {
    display: flex;
    align-items: center;
    gap: 6px;
    height: 29px;
    border-bottom: 1px solid #707276;
    background: #c6c9cf;
  }

  .select-box {
    position: relative;
    width: 99px;
    height: 22px;
  }

  .select-box.first {
    width: 79px;
  }

  .select-box::after {
    content: "";
    position: absolute;
    top: 10px;
    right: 4px;
    border: 3px solid transparent;
    border-top-color: #555;
  }

  select {
    width: 100%;
    height: 100%;
    padding: 0 3px;
    border: 1px solid #a9adb2;
    border-radius: 0;
    background: #fdfdfd;
    color: #222;
    font: inherit;
    appearance: none;
  }

  /* work area */
  main {
    flex: 1;
    display: flex;
    min-height: 0;
  }

  .module-strip {
    display: flex;
    flex-direction: column;
    flex: none;
    width: 36px;
    border-right: 1px solid #b4b6ba;
  }

  .strip-head {
    height: 28px;
    padding: 1px 0 0 7px;
    border-bottom: 1px solid #c8d0d8;
    background: #eef3f8;
  }

  .strip-head button {
    display: grid;
    place-items: center;
    width: 25px;
    height: 24px;
    border: 1px solid #6fa6d8;
    border-radius: 3px;
    background: #e2effa;
  }

  .strip-head svg {
    width: 16px;
  }

  .strip-selected {
    height: 20px;
    margin-top: 364px;
    background: #c5d6ee;
  }

  .left-panels {
    display: flex;
    flex-direction: column;
    flex: none;
    gap: 5px;
    width: 282px;
    margin-left: 4px;
  }

  .panel {
    border: 1px solid #c2c4c8;
    border-top: 0;
  }

  .components {
    height: 314px;
  }

  .layers {
    flex: 1;
    border-bottom: 0;
  }

  .panel-strip {
    display: flex;
    justify-content: flex-end;
    height: 12px;
    padding-right: 5px;
    background: #d3d5d8;
    line-height: 12px;
  }

  .panel-strip button {
    color: #555;
  }

  .tabs {
    display: flex;
    height: 22px;
    border-bottom: 1px solid #cfcfcf;
    background: #ebebeb;
  }

  .tabs button {
    width: 65px;
    border-right: 1px solid #bdbdbd;
    background: #dedede;
    color: #777;
  }

  .tabs .active {
    background: #f2f2f2;
    color: #111;
  }

  .tools {
    display: flex;
    align-items: center;
    gap: 13px;
    height: 29px;
    padding-left: 3px;
    background: #ededed;
  }

  .tools.links {
    gap: 14px;
    padding-left: 5px;
  }

  .overflow {
    display: flex;
    margin-left: auto;
    padding-right: 1px;
  }

  .overflow i {
    border: 3px solid transparent;
    border-left-color: #333;
    border-right: 0;
  }

  .search {
    display: flex;
    align-items: center;
    height: 19px;
    padding: 0 6px 0 2px;
    border: solid #cfcfcf;
    border-width: 1px 0;
    background: #fff;
  }

  .search input {
    flex: 1;
    min-width: 0;
    padding: 0;
    border: 0;
    outline: 0;
    background: none;
    font: inherit;
  }

  .search input::placeholder {
    color: #8a8a8a;
  }

  .search svg {
    width: 12px;
  }

  .tree {
    list-style: none;
  }

  .tree li {
    display: flex;
    align-items: center;
    gap: 8px;
    height: 21px;
    padding-left: 9px;
  }

  .selected {
    height: 20px;
    margin-left: 31px;
    padding: 2px 4px;
    background: #c5d6ee;
  }

  .expander {
    width: 7px;
    height: 7px;
    background: #333;
    clip-path: polygon(100% 0, 100% 100%, 0 100%);
  }

  .layer-table {
    border-top: 1px solid #c8c8c8;
    background: linear-gradient(#ececec 20px, #fdfdfd 20px);
  }

  table {
    border-collapse: collapse;
    table-layout: fixed;
  }

  .layers table {
    width: 238px;
    background: #fdfdfd;
  }

  .layers th,
  .layers td {
    height: 20px;
    padding: 0 4px;
    border: 1px solid #c8c8c8;
    border-width: 0 1px 1px 0;
    font-weight: 400;
    text-align: left;
    white-space: nowrap;
  }

  .layers th {
    padding: 0;
    background: #efefef;
    text-align: center;
  }

  .layers th:nth-child(1) {
    width: 50px;
  }

  .layers th:nth-child(2) {
    width: 36px;
  }

  .branch {
    display: block;
    width: 5px;
    height: 7px;
    margin: 0 auto;
    background: #8a8a8a;
    clip-path: polygon(0 0, 100% 50%, 0 100%, 0 0, 1px 2px, 1px 5px, 3px 50%, 1px 2px);
  }

  input[type="checkbox"],
  input[type="radio"] {
    flex: none;
    display: grid;
    place-items: center;
    width: 14px;
    height: 14px;
    margin: 0 auto;
    border: 1px solid #8a8a8a;
    border-radius: 3px;
    background: #fdfdfd;
    appearance: none;
  }

  input[type="radio"] {
    border-radius: 50%;
  }

  input[type="radio"]:checked::after {
    content: "";
    width: 6px;
    height: 6px;
    border-radius: 50%;
    background: #3a86d8;
  }

  input[type="checkbox"]:checked::after {
    content: "";
    width: 8px;
    height: 4px;
    border: solid #777;
    border-width: 0 0 1px 1px;
    transform: rotate(-45deg);
  }

  .divider {
    display: flex;
    align-items: flex-start;
    flex: none;
    width: 4px;
    background: #fdfdfd;
  }

  .grip {
    width: 100%;
    height: 100px;
    background: #666d78;
  }

  .divider .grip {
    margin-top: 201px;
  }

  .center {
    flex: 1;
    display: flex;
    flex-direction: column;
    min-width: 0;
  }

  .viewport {
    position: relative;
    flex: 1;
    min-height: 0;
    background: #000;
  }

  .scene {
    position: absolute;
    inset: 0;
    width: 100%;
    height: 100%;
  }

  .grid {
    fill: none;
    stroke: #1b6b1f;
  }

  .dashed {
    stroke-dasharray: 9 3;
  }

  .red {
    stroke: #7c1010;
  }

  .bright {
    stroke: #e01818;
  }

  .marks circle {
    fill: none;
    stroke: #1d7a22;
    stroke-dasharray: 6 2;
  }

  .marks text,
  .dims text {
    fill: #fff;
    font-size: 17px;
    text-anchor: middle;
  }

  .gizmo-text text {
    font-size: 15px;
    text-anchor: middle;
  }

  .top,
  .face,
  .side,
  .wall,
  .olive,
  .yellow,
  .ledge,
  .violet,
  .violet-top,
  .violet-side,
  .grey,
  .grey-top {
    shape-rendering: crispEdges;
  }

  .top {
    fill: #1da31d;
  }

  .face {
    fill: #22b722;
  }

  .side {
    fill: #178017;
  }

  .wall {
    fill: #5a5a10;
  }

  .shade {
    fill: #3f3f0a;
  }

  .olive {
    fill: #97971f;
  }

  .yellow {
    fill: #e4e42c;
  }

  .ledge {
    fill: #c9c92a;
  }

  .frame {
    fill: #1818dc;
  }

  .glass {
    fill: #0b0870;
  }

  .violet {
    fill: #7000e6;
  }

  .violet-top {
    fill: #6200cc;
  }

  .violet-side {
    fill: #4b0096;
  }

  .grey {
    fill: #707070;
  }

  .grey-top {
    fill: #979797;
  }

  .view-tools {
    position: absolute;
    top: 0;
    right: 0;
    display: flex;
    flex-direction: column;
    align-items: center;
    gap: 5px;
    width: 32px;
    height: 237px;
    padding-top: 13px;
    border-radius: 0 0 0 3px;
    background: rgba(190, 190, 205, 0.35);
  }

  .view-tools svg {
    display: block;
    width: 24px;
    height: 24px;
    opacity: 0.85;
    text-anchor: middle;
  }

  .view-tools hr {
    width: 24px;
    margin: 0;
    border: 0;
    border-top: 1px solid #8a8a94;
  }

  .bottom-divider {
    display: flex;
    justify-content: center;
    height: 5px;
  }

  .bottom-divider .grip {
    width: 100px;
    height: 4px;
  }

  /* rebar panel */
  .rebar {
    display: flex;
    flex-direction: column;
    height: 332px;
    background: #ececec;
  }

  .rebar .panel-strip {
    padding-right: 6px;
  }

  .rebar h2 {
    height: 22px;
    padding: 3px 9px;
    border-bottom: 1px solid #cbcbcb;
    color: #444;
  }

  .rebar-frame {
    flex: 1;
    display: flex;
    flex-direction: column;
    min-height: 0;
    margin: 8px 9px 9px;
    border: 1px solid #8e9094;
    border-top: 0;
  }

  .rebar-tools {
    display: flex;
    align-items: center;
    height: 30px;
    padding-top: 2px;
    border-bottom: 1px solid #b3b3b3;
  }

  .nav {
    width: 24px;
    font-size: 11px;
  }

  .step {
    display: grid;
    place-items: center;
    width: 22px;
  }

  .nav:first-child {
    margin-left: -3px;
  }

  .step:nth-child(5) {
    margin-left: 2px;
  }

  .rebar-commands {
    display: flex;
    align-items: center;
    gap: 14px;
    margin-left: 6px;
  }

  .rebar-commands span {
    white-space: nowrap;
  }

  .rebar-scroll {
    flex: 1;
    overflow: hidden;
    background: #fdfdfd;
  }

  .rebar table {
    width: 1270px;
  }

  .row-number {
    width: 7px;
  }

  .rebar th,
  .rebar td {
    padding: 0;
    border: 1px solid #bdbdbd;
    border-width: 0 1px 1px 0;
    font-weight: 400;
    white-space: nowrap;
  }

  .rebar thead th {
    height: 22px;
    background: #ececec;
    color: #333;
  }

  .rebar tbody th {
    overflow: hidden;
    background: #eef2d8;
    color: #000;
    font-weight: 700;
  }

  .rebar tbody td {
    height: 46px;
  }

  .rebar thead .current {
    background: #76b6f8;
    color: #fff;
  }

  .rebar td.current {
    background: #bfd0ec;
  }

  .scrollbar {
    height: 17px;
    padding: 4px 13px;
    background: #fdfdfd;
  }

  .scrollbar i {
    display: block;
    width: 80%;
    height: 8px;
    border-radius: 4px;
    background: #c5c5c5;
  }

  /* display settings */
  .display {
    display: flex;
    flex-direction: column;
    flex: none;
    width: 139px;
    overflow: hidden;
    border-left: 1px solid #b0b3b8;
    background: #ededed;
  }

  .display h2 {
    height: 22px;
    padding: 3px 7px;
    border-bottom: 1px solid #cfcfcf;
    color: #444;
  }

  .display-tabs {
    display: flex;
    height: 30px;
    padding: 5px 0 0 3px;
  }

  .display-tabs button {
    width: 61px;
    background: #e0e0e0;
    color: #444;
  }

  .display-tabs .active {
    border: 1px solid #d0d0d0;
    border-bottom: 0;
    background: #fff;
    color: #3a8de0;
  }

  label {
    display: flex;
    align-items: center;
    white-space: nowrap;
  }

  .display input {
    margin: 0;
  }

  .scope {
    display: flex;
    gap: 17px;
    height: 30px;
    padding-left: 6px;
    border-bottom: 1px solid #d8d8d8;
  }

  .scope label {
    gap: 8px;
  }

  .floors {
    flex: 1;
    padding-top: 3px;
    background: #fdfdfd;
    color: #777;
  }

  .floors label {
    gap: 10px;
    height: 24px;
    padding-left: 46px;
  }

  .floors .all {
    padding-left: 9px;
  }

  .floors input {
    border-color: #a2a2a2;
    background: #f3f3f3;
  }

  .highlight {
    height: 39px;
    padding: 12px 0 0 1px;
    border-top: 1px solid #c2c2c2;
  }

  .highlight label {
    gap: 7px;
  }

  /* status bar */
  .status {
    display: flex;
    align-items: center;
    height: 33px;
    padding-top: 3px;
    overflow: hidden;
    border-bottom: 3px solid #000;
    background: #dcdcde;
  }

  .readout {
    flex: none;
    white-space: nowrap;
  }

  .coords {
    display: flex;
    justify-content: flex-end;
    width: 65px;
  }

  .height {
    width: 95px;
    padding-left: 12px;
  }

  .elevation {
    width: 133px;
  }

  .count {
    width: 103px;
  }

  .hidden-count {
    width: 80px;
  }

  .status-tools {
    display: flex;
    align-items: center;
    gap: 3px;
  }

  .status-tools button {
    display: flex;
    align-items: center;
    height: 25px;
    padding: 0 4px;
    border: 1px solid #b2b2b4;
    background: #cfcfd1;
  }

  .status-tools .wide {
    padding: 0 6px;
  }

  .status-tools .on {
    border-color: #6aa6d8;
    background: #fff;
  }

  .status-tools button .caret {
    margin-right: -2px;
  }

  /* floating overlays */
  .brand {
    position: absolute;
    top: 11px;
    right: 14px;
    width: 60px;
    height: 60px;
  }

  .network {
    position: absolute;
    top: 82px;
    right: 42px;
    display: flex;
    align-items: center;
    gap: 6px;
    width: 122px;
    height: 52px;
    padding-left: 5px;
    border: 1px solid #c4c4c8;
    border-radius: 26px;
    background: #fff;
    box-shadow: 0 2px 5px rgba(0, 0, 0, 0.35);
    color: #555;
  }

  .network p {
    display: flex;
    align-items: center;
    gap: 4px;
    height: 20px;
    font-size: 11px;
  }

  .network p svg {
    width: 12px;
  }

  .wifi {
    width: 38px;
  }

  .watermark {
    position: absolute;
    right: 0;
    bottom: 50px;
    width: 161px;
    overflow: hidden;
    color: rgba(120, 120, 120, 0.6);
    white-space: nowrap;
    pointer-events: none;
  }

  .watermark p {
    font-size: 14px;
    line-height: 22px;
  }

  .watermark p:first-child {
    font-size: 20px;
    line-height: 26px;
  }

  .cursor {
    position: absolute;
    top: 76px;
    left: 107px;
    width: 12px;
    height: 19px;
  }
</style>
